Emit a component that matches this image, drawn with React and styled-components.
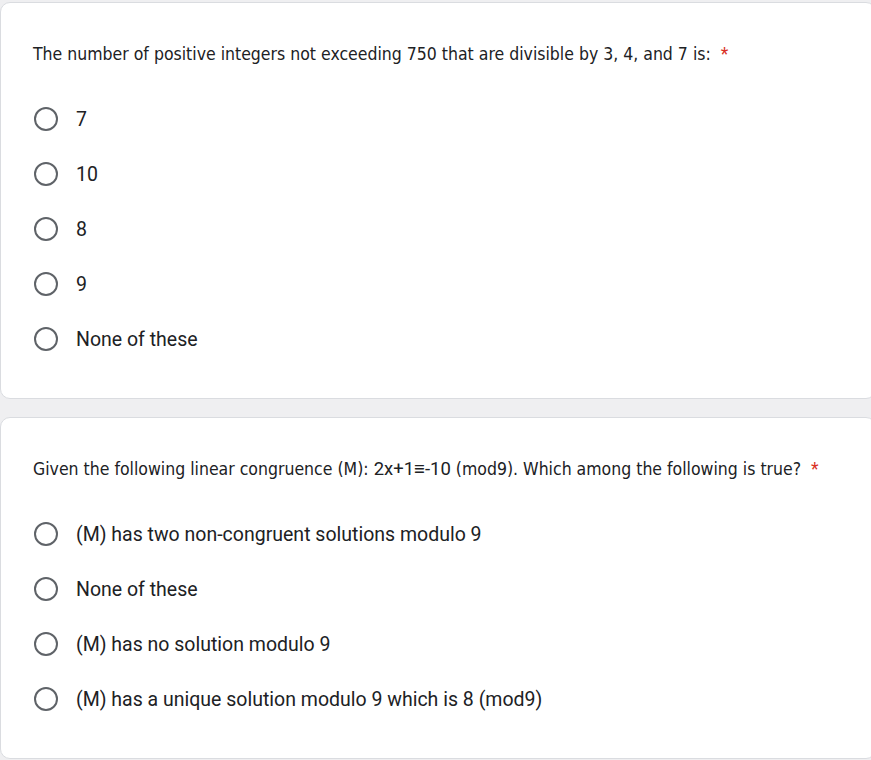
import React from 'react';
import styled, { createGlobalStyle } from 'styled-components';

const GlobalStyle = createGlobalStyle`
  html, body {
    margin: 0;
    padding: 0;
    background: #efeff1;
    overflow: hidden;
  }
`;

const Page = styled.div`
  padding-top: 2px;
  display: flex;
  flex-direction: column;
  gap: 18px;
`;

const Card = styled.section`
  width: 876px;
  box-sizing: border-box;
  background: #fff;
  border: 1px solid #dadce0;
  border-radius: 10px;
  padding: 38px 0 38px 32px;
`;

const Question = styled.div`
  font-family: "DejaVu Sans Condensed", "DejaVu Sans", sans-serif;
  font-size: 17.5px;
  line-height: 26px;
  color: #202124;
  margin-bottom: 31px;
`;

const Plain = styled.span`
  font-family: Roboto, sans-serif;
  font-size: 18.5px;
`;

const Required = styled.span`
  color: #d93025;
  font-family: Roboto, sans-serif;
  margin-left: 10px;
`;

const Options = styled.div`
  display: flex;
  flex-direction: column;
  gap: 13px;
`;

const Option = styled.label`
  display: flex;
  align-items: center;
  height: 42px;
  gap: 18px;
  padding-left: 1px;
  font-family: Roboto, sans-serif;
  font-size: 19.5px;
  color: #202124;
`;

const Radio = styled.span`
  width: 20px;
  height: 20px;
  border: 2px solid #5f6368;
  border-radius: 50%;
  flex: none;
`;

const questions = [
  {
    text: <>The number of positive integers not exceeding 750 that are divisible by 3, 4, and 7 is:</>,
    options: ['7', '10', '8', '9', 'None of these'],
  },
  {
    text: (
      <>
        Given the following linear congruence (M): <Plain>2x+1≡-10</Plain> (mod9). Which among the following is true?
      </>
    ),
    options: [
      '(M) has two non-congruent solutions modulo 9',
      'None of these',
      '(M) has no solution modulo 9',
      '(M) has a unique solution modulo 9 which is 8 (mod9)',
    ],
  },
];

export default function App() {
  return (
    <>
      <GlobalStyle />
      <Page>
        {questions.map((q, i) => (
          <Card key={i}>
            <Question>
              {q.text}
              <Required>*</Required>
            </Question>
            <Options>
              {q.options.map((o) => (
                <Option key={o}>
                  <Radio />
                  {o}
                </Option>
              ))}
            </Options>
          </Card>
        ))}
      </Page>
    </>
  );
}
